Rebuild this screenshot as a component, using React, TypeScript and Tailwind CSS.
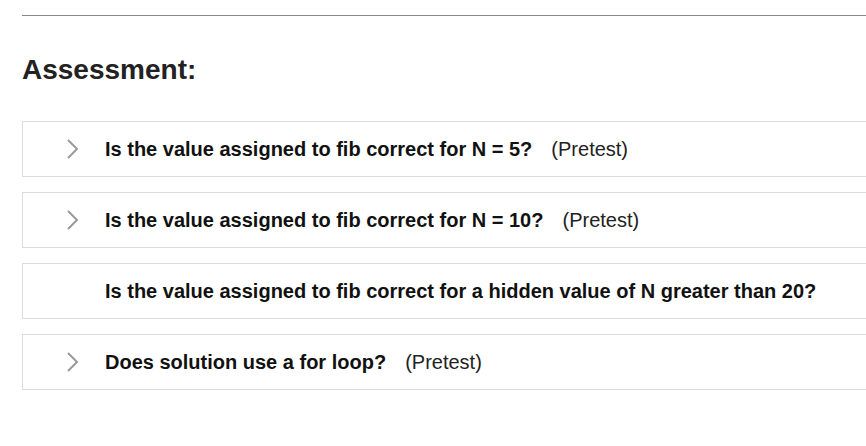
const rows = [
  { q: 'Is the value assigned to fib correct for N = 5?', pretest: true, chevron: true },
  { q: 'Is the value assigned to fib correct for N = 10?', pretest: true, chevron: true },
  { q: 'Is the value assigned to fib correct for a hidden value of N greater than 20?', pretest: false, chevron: false },
  { q: 'Does solution use a for loop?', pretest: true, chevron: true },
];

function Chevron() {
  return (
    <svg width="14" height="20" viewBox="0 0 14 20" aria-hidden>
      <path d="M2 1 L11 10 L2 19" fill="none" stroke="#9a9a9a" strokeWidth="2" />
    </svg>
  );
}

export default function App() {
  return (
    <div className="w-full h-[446px] overflow-hidden bg-white" style={{ fontFamily: '"Liberation Sans", Arial, sans-serif' }}>
      <div className="w-[900px] pl-[22px] pt-[15px]">
        <hr className="border-0 border-t border-[#888]" />
        <h2 className="mt-[34px] text-[28px] font-bold text-[#222] leading-[40px]">Assessment:</h2>
        <div className="mt-[31px] flex flex-col gap-[15px]">
          {rows.map((r) => (
            <div key={r.q} className="h-[56px] border border-[#dcdcdc] flex items-center text-[20px] text-[#111]">
              <div className="w-[82px] flex justify-end pr-[25px]">
                {r.chevron && <Chevron />}
              </div>
              <span className="font-bold">{r.q}</span>
              {r.pretest && <span className="ml-[19px] text-[#222]">(Pretest)</span>}
            </div>
          ))}
        </div>
      </div>
    </div>
  );
}
